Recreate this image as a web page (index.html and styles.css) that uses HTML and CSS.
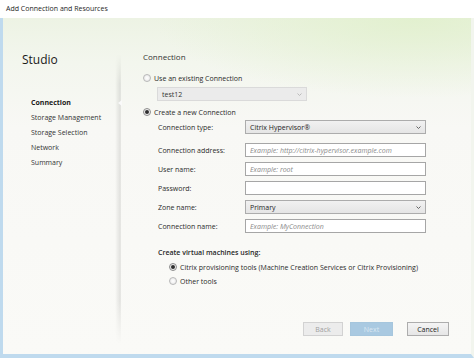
FILE: index.html
```html
<!DOCTYPE html>
<html lang="en">
<head>
	<meta charset="UTF-8">
	<title>Add Connection and Resources</title>
	<link rel="stylesheet" href="styles.css">
</head>
<body>
	<div class="window">
		<div class="titlebar">Add Connection and Resources</div>
		<div class="frame">
			<div class="sidebar">
				<div class="brand">Studio</div>
				<ul class="steps">
					<li class="active">Connection</li>
					<li>Storage Management</li>
					<li>Storage Selection</li>
					<li>Network</li>
					<li>Summary</li>
				</ul>
			</div>
			<div class="main">
				<div class="heading">Connection</div>
				<div class="radio-row first"><span class="radio off"></span>Use an existing Connection</div>
				<div class="select existing disabled">
					<span>test12</span>
					<svg width="5" height="3" viewBox="0 0 5 3"><path d="M0.5 0.5 L2.5 2.5 L4.5 0.5" fill="none" stroke="#b5b5b5" stroke-width="0.9"/></svg>
				</div>
				<div class="radio-row second"><span class="radio on"></span>Create a new Connection</div>

				<div class="form">
					<div class="field">
						<label>Connection type:</label>
						<div class="select">
							<span>Citrix Hypervisor®</span>
							<svg width="5" height="3" viewBox="0 0 5 3"><path d="M0.5 0.5 L2.5 2.5 L4.5 0.5" fill="none" stroke="#555" stroke-width="0.9"/></svg>
						</div>
					</div>
					<div class="field addr">
						<label>Connection address:</label>
						<input type="text" placeholder="Example: http://citrix-hypervisor.example.com">
					</div>
					<div class="field">
						<label>User name:</label>
						<input type="text" placeholder="Example: root">
					</div>
					<div class="field">
						<label>Password:</label>
						<input type="password">
					</div>
					<div class="field">
						<label>Zone name:</label>
						<div class="select">
							<span>Primary</span>
							<svg width="5" height="3" viewBox="0 0 5 3"><path d="M0.5 0.5 L2.5 2.5 L4.5 0.5" fill="none" stroke="#555" stroke-width="0.9"/></svg>
						</div>
					</div>
					<div class="field">
						<label>Connection name:</label>
						<input type="text" placeholder="Example: MyConnection">
					</div>
				</div>

				<div class="subhead">Create virtual machines using:</div>
				<div class="radio-row sub"><span class="radio on"></span>Citrix provisioning tools (Machine Creation Services or Citrix Provisioning)</div>
				<div class="radio-row sub"><span class="radio off"></span>Other tools</div>

				<div class="buttons">
					<button class="btn back">Back</button>
					<button class="btn next">Next</button>
					<button class="btn cancel">Cancel</button>
				</div>
			</div>
		</div>
	</div>
</body>
</html>
```

FILE: styles.css
```css
*{ padding: 0; margin: 0; list-style: none; box-sizing: border-box;}
body{ font-family: "Open Sans", "Noto Sans", sans-serif; font-size: 7px; color: #262626; background: #fff;}

.window{ width: 474px; height: 358px; display: flex; flex-direction: column;}
.titlebar{ height: 18px; line-height: 18px; padding-left: 6px; background: #fff; color: #1e1e1e;}

.frame{ flex: 1; display: flex; border-left: 3px solid #bfdaee; border-bottom: 4px solid #bfdaee; border-right: 3px solid #f2f5ee;
	background: radial-gradient(ellipse 260px 80px at 88% 0, rgba(225,240,205,0.9), rgba(225,240,205,0)),
		linear-gradient(to bottom, #edf3e4 0, #f3f6ee 45px, #f8f8f5 110px, #fafaf7 100%);}

/* left column */
.sidebar{ width: 118px; position: relative; padding-top: 34px;}
.sidebar::after{ content: ''; position: absolute; right: 0; top: 36px; bottom: 10px; width: 5px;
	background: linear-gradient(to right, rgba(0,0,0,0), rgba(0,0,0,0.09));
	border-right: 1px solid rgba(0,0,0,0.07);
	-webkit-mask-image: linear-gradient(to bottom, transparent, #000 30px, #000 85%, transparent);
	mask-image: linear-gradient(to bottom, transparent, #000 30px, #000 85%, transparent);}
.brand{ font-size: 12px; line-height: 16px; padding-left: 19px; color: #1a1a1a;}
.steps{ margin-top: 27px;}
.steps li{ line-height: 15px; padding-left: 28px; color: #333; position: relative;}
.steps li.active{ font-weight: 700; color: #1a1a1a;}
.steps li.active::after{ content: ''; position: absolute; right: -1px; top: 5px; z-index: 1; border-right: 4px solid #fafafa; border-top: 3px solid transparent; border-bottom: 3px solid transparent;}

/* right column */
.main{ flex: 1; padding: 33px 22px 18px 22px; display: flex; flex-direction: column;}
.heading{ font-size: 8px; line-height: 12px; color: #333;}

.radio-row{ display: flex; align-items: center; height: 12px; color: #2a2a2a;}
.radio-row.first{ margin-top: 9px;}
.radio-row.second{ margin-top: 5px;}
.radio-row.sub{ margin-top: 2px; margin-left: 26px;}
.radio{ width: 8px; height: 8px; border-radius: 50%; margin-right: 3px; border: 1px solid #8c8c8c; background: radial-gradient(#ffffff, #e4e4e4); display: flex; align-items: center; justify-content: center;}
.radio.off{ border-color: #b8b8b8;}
.radio.on::after{ content: ''; width: 4px; height: 4px; border-radius: 50%; background: #2e2e2e;}

.select{ height: 14px; width: 181px; display: flex; align-items: center; justify-content: space-between; padding: 0 4px;
	border: 1px solid #acacac; background: linear-gradient(#f1f1f1, #e5e5e5); color: #1e1e1e;}
.select.existing{ width: 150px; margin: 3px 0 0 14px; border-color: #dadada; background: #ebebeb; color: #333;}

.form{ margin: 2px 0 0 15px;}
.field{ display: flex; align-items: center; height: 14px; margin-top: 5px;}
.field:first-child{ margin-top: 0;}
.field.addr{ margin-top: 9px;}
.field label{ width: 87px; color: #2a2a2a;}
.field input{ width: 181px; height: 14px; padding: 0 4px; border: 1px solid #a6a6a6; background: #fff; font: inherit; outline: none;}
.field input::placeholder{ font-style: italic; color: #8a8a8a;}

.subhead{ margin: 14px 0 0 15px; line-height: 12px; font-weight: 600; color: #262626;}

.buttons{ margin-top: auto; display: flex; justify-content: flex-end; height: 14px;}
.btn{ height: 14px; font: inherit; border: 1px solid #adadad; background: linear-gradient(#f4f4f4, #e6e6e6); color: #1a1a1a;}
.btn.back{ width: 40px; border-color: #d2d2d2; background: #ececec; color: #a0a0a0;}
.btn.next{ width: 43px; margin-left: 7px; border-color: #a6c6dd; background: #a9c9e1; color: #dbe8f2;}
.btn.cancel{ width: 42px; margin-left: 14px;}
```
